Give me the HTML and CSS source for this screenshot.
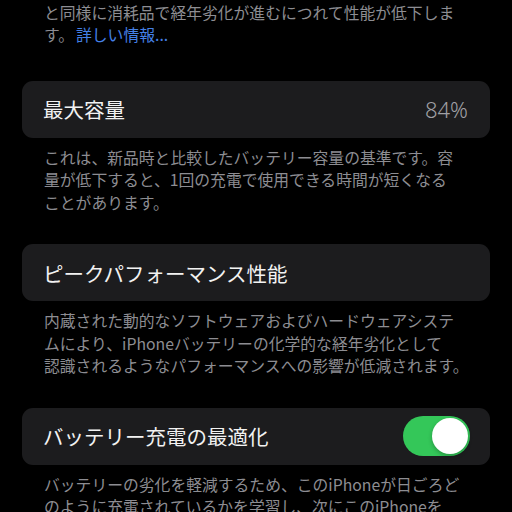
FILE: index.html
```html
<!DOCTYPE html>
<html lang="ja">
<head>
    <meta charset="utf-8">
    <title>バッテリーの状態</title>
    <link rel="stylesheet" href="styles.css">
</head>
<body>
    <div class="page">
        <p class="note note-top">
            iPhoneのバッテリーは、すべての充電式バッテリー<br>
            と同様に消耗品で経年劣化が進むにつれて性能が低下しま<br>
            す。<a class="link" href="#">詳しい情報...</a>
        </p>

        <!-- 最大容量 -->
        <div class="card">
            <span class="card-title">最大容量</span>
            <span class="card-value">84%</span>
        </div>
        <p class="note">
            これは、新品時と比較したバッテリー容量の基準です。容<br>
            量が低下すると、1回の充電で使用できる時間が短くなる<br>
            ことがあります。
        </p>

        <!-- ピークパフォーマンス -->
        <div class="card">
            <span class="card-title">ピークパフォーマンス性能</span>
        </div>
        <p class="note">
            内蔵された動的なソフトウェアおよびハードウェアシステ<br>
            ムにより、iPhoneバッテリーの化学的な経年劣化として<br>
            認識されるようなパフォーマンスへの影響が低減されます。
        </p>

        <!-- 充電の最適化 -->
        <div class="card">
            <span class="card-title">バッテリー充電の最適化</span>
            <span class="toggle on"><span class="knob"></span></span>
        </div>
        <p class="note">
            バッテリーの劣化を軽減するため、このiPhoneが日ごろど<br>
            のように充電されているかを学習し、次にこのiPhoneを<br>
            使用するときまで80%以上の充電を保留します。
        </p>
    </div>
</body>
</html>
```

FILE: styles.css
```css
body {
    margin: 0;
    background: #000;
    font-family: "Noto Sans CJK JP", "Noto Sans", sans-serif;
    overflow: hidden;
}

.page {
    width: 512px;
}

.note {
    margin: 9px 0 0;
    padding: 0 22px 0 44px;
    font-size: 15.8px;
    line-height: 22.5px;
    color: #8d8d92;
    white-space: nowrap;
}

.note-top {
    margin-top: -21px;
    margin-bottom: 34px;
}

.link {
    color: #4580e6;
    text-decoration: none;
    margin-left: 2px;
}

.card {
    display: flex;
    align-items: center;
    justify-content: space-between;
    margin: 0 22px;
    height: 57px;
    padding: 0 22px 0 21px;
    background: #1c1c1e;
    border-radius: 11px;
}

.note + .card {
    margin-top: 30px;
}

.card-title {
    font-size: 20.5px;
    color: #f2f2f2;
}

.card-value {
    font-size: 22px;
    color: #a0a0a5;
    font-family: "Noto Sans", sans-serif;
    font-weight: 300;
}

.toggle {
    display: flex;
    align-items: center;
    justify-content: flex-end;
    width: 67px;
    height: 40px;
    margin-right: -2px;
    padding: 2px;
    box-sizing: border-box;
    border-radius: 20px;
    background: #34c759;
}

.knob {
    width: 36px;
    height: 36px;
    border-radius: 50%;
    background: #fff;
    box-shadow: 0 2px 4px rgba(0, 0, 0, 0.25);
}
```
